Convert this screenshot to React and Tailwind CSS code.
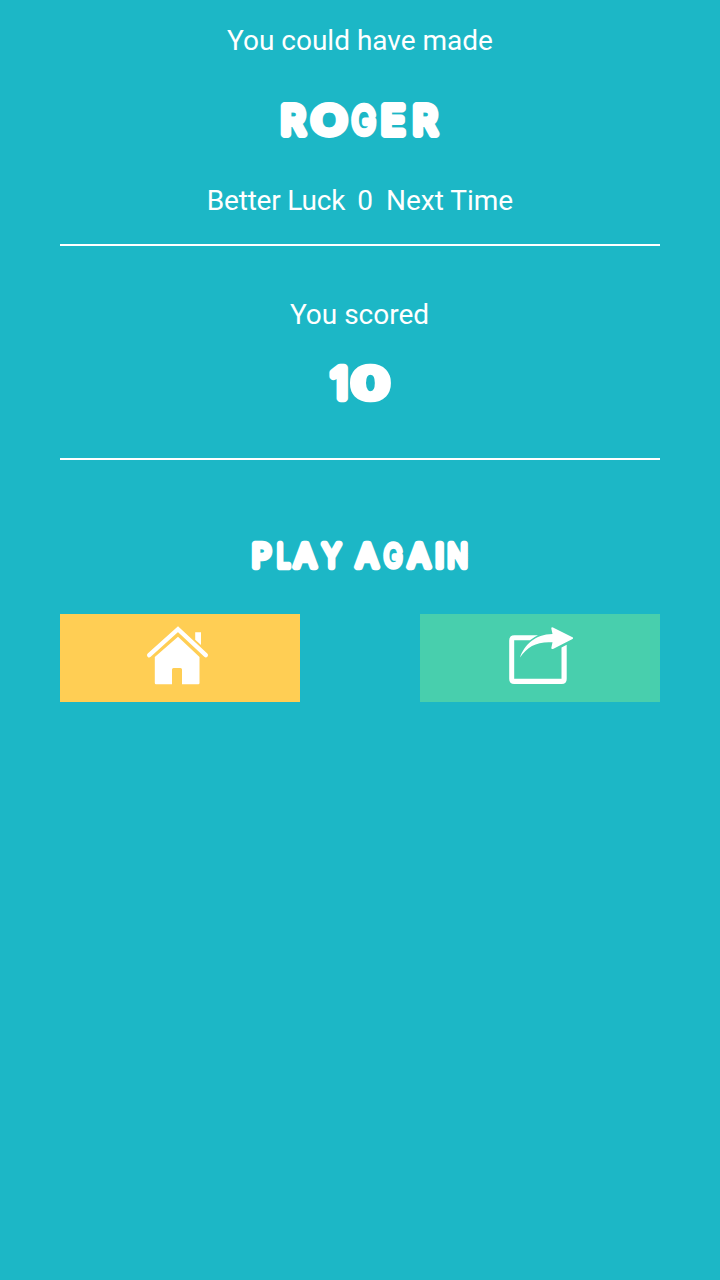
import React from 'react';

// [character, centre x, horizontal stretch, stroke override]
const ROGER = [
    ['R', 13, 0.98],
    ['O', 49, 1.19],
    ['G', 83.8, 0.84, 6.5],
    ['E', 113, 1.02],
    ['R', 145, 0.98],
];

const TEN = [
    ['1', 10.5, 1],
    ['0', 41.5, 1.42],
];

const PLAY_AGAIN = [
    ['P', 10.5, 0.96],
    ['L', 32.5, 0.74],
    ['A', 54, 1.02],
    ['Y', 80.5, 0.86],
    [' ', 98, 1],
    ['A', 116, 1.02],
    ['G', 142, 0.8, 5.5],
    ['A', 168, 1.02],
    ['I', 188.5, 1],
    ['N', 206.5, 0.84],
];

// Chunky rounded lettering
const RoundText = ({ glyphs, width, height, y, size, stroke }) => (
    <svg width={width} height={height} viewBox={`0 0 ${width} ${height}`} className="overflow-visible">
        {glyphs.map(([char, x, stretch, ownStroke], i) => (
            <text
                key={i}
                transform={`translate(${x} ${y}) scale(${stretch} 1)`}
                textAnchor="middle"
                fontSize={size}
                strokeWidth={ownStroke || stroke}
                className="font-['Inter',sans-serif] font-light fill-white stroke-white [stroke-linejoin:round]"
            >
                {char}
            </text>
        ))}
    </svg>
);

const HomeIcon = () => (
    <svg width="64" height="60" viewBox="0 0 64 60" fill="#fff" className="-ml-1.5 -mt-1">
        <path d="M4.200 29.200 33 3.200l27.800 26" fill="none" stroke="#fff" strokeWidth="4.400" strokeLinejoin="miter" strokeLinecap="round" />
        <path d="M50.200 6.200H56V19l-5.800-5.300z" />
        <path d="M33 10.800 54.500 31v26q0 1.200-1.200 1.200H37V43.500q0-1.500-1.500-1.500h-7q-1.500 0-1.500 1.500v14.700H11q-1.200 0-1.200-1.200V31z" />
    </svg>
);

const ShareIcon = () => (
    <svg width="66" height="60" viewBox="0 0 66 60" fill="#fff" className="-mt-0.5">
        <path d="M7.500 8.200H31Q27 10 23 13.200H7.200V51.800H54.500V20.500L59.700 17.800V52Q59.700 57 54.700 57H7.200Q2.200 57 2.200 52V13.500Q2.200 8.200 7.500 8.200Z" />
        <path d="M13 30.500C17 18.500 28 7 45.500 7L44.300 1.500Q44.300-.200 46 .500L65.500 10.200Q67 11 65.500 11.900L46.500 21.700Q44.300 22.700 44.300 21L45.500 15.300C30 14.300 20.500 19.500 13 30.500Z" />
    </svg>
);

const GameOver = () => {
    return (
        <section className="min-h-screen bg-[#1cb7c6] text-white px-[60px] flex flex-col items-center font-['Roboto',sans-serif] text-[28px] leading-8">
            <p className="mt-[25px]">You could have made</p>

            <h1 className="mt-[43px] h-10">
                <RoundText glyphs={ROGER} width={160} height={40} y={34} size={38.5} stroke={8} />
            </h1>

            <p className="mt-[45px] flex gap-3 whitespace-nowrap">
                <span className="tracking-[-0.2px]">Better Luck</span>
                <span>0</span>
                <span className="ml-px">Next Time</span>
            </p>

            <hr className="mt-[27px] w-full border-0 h-0.5 bg-white" />

            <p className="mt-[53px] mr-px">You scored</p>

            <h2 className="mt-[31px] h-10">
                <RoundText glyphs={TEN} width={62} height={40} y={36} size={41.5} stroke={8.5} />
            </h2>

            <hr className="mt-14 w-full border-0 h-0.5 bg-white" />

            <button className="mt-20 h-8">
                <RoundText glyphs={PLAY_AGAIN} width={218} height={32} y={27} size={31.5} stroke={6.5} />
            </button>

            <div className="mt-[42px] w-full flex justify-between">
                <button className="w-60 h-[88px] bg-[#ffce54] flex items-center justify-center" aria-label="Home">
                    <HomeIcon />
                </button>
                <button className="w-60 h-[88px] bg-[#48cfad] flex items-center justify-center" aria-label="Share">
                    <ShareIcon />
                </button>
            </div>
        </section>
    );
};

export default GameOver;
